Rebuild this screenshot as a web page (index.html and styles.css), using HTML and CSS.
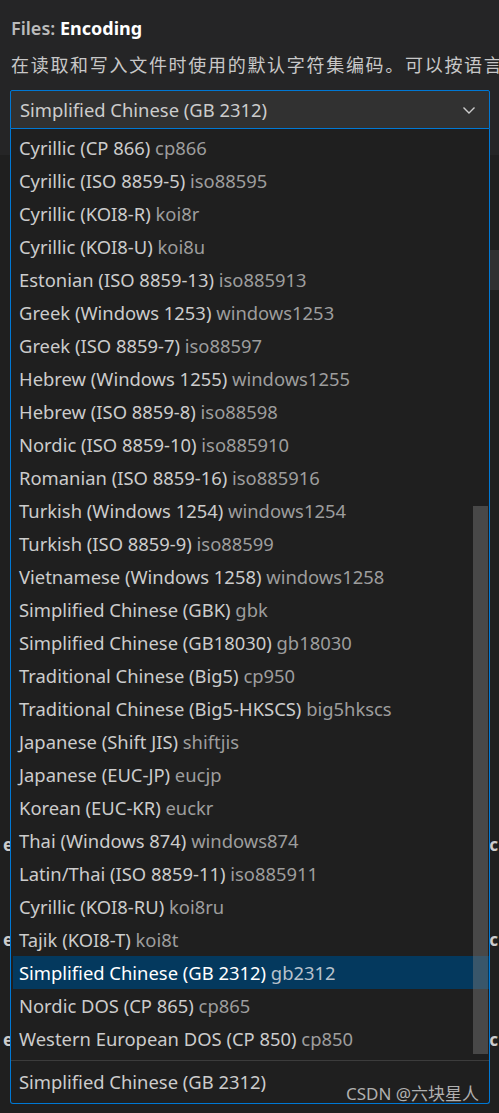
FILE: index.html
```html
<!DOCTYPE html>
<html lang="zh-CN">
<head>
<meta charset="utf-8">
<title>Files: Encoding</title>
<link rel="stylesheet" href="styles.css">
</head>
<body>
<div class="page">
  <div class="setting">
    <div class="title"><span class="cat">Files: </span><span class="name">Encoding</span></div>
    <div class="desc">在读取和写入文件时使用的默认字符集编码。可以按语言对此项进行配置。</div>
    <div class="select">
      <span class="select-text">Simplified Chinese (GB 2312)</span>
      <svg class="chev" width="16" height="16" viewBox="0 0 16 16"><path d="M2.5 5.5 L8 11 L13.5 5.5" fill="none" stroke="#cccccc" stroke-width="1.4"/></svg>
    </div>
  </div>
  <div class="bg-input"></div>
  <div class="bg-row r1"><span>e</span><span>c</span></div>
  <div class="bg-row r2"><span>e</span><span>c</span></div>
  <div class="bg-row r3"><span>e</span><span>c</span></div>

  <div class="dropdown">
    <div class="options">
      <div class="opt">Cyrillic (CP 866) <span class="d">cp866</span></div>
      <div class="opt">Cyrillic (ISO 8859-5) <span class="d">iso88595</span></div>
      <div class="opt">Cyrillic (KOI8-R) <span class="d">koi8r</span></div>
      <div class="opt">Cyrillic (KOI8-U) <span class="d">koi8u</span></div>
      <div class="opt">Estonian (ISO 8859-13) <span class="d">iso885913</span></div>
      <div class="opt">Greek (Windows 1253) <span class="d">windows1253</span></div>
      <div class="opt">Greek (ISO 8859-7) <span class="d">iso88597</span></div>
      <div class="opt">Hebrew (Windows 1255) <span class="d">windows1255</span></div>
      <div class="opt">Hebrew (ISO 8859-8) <span class="d">iso88598</span></div>
      <div class="opt">Nordic (ISO 8859-10) <span class="d">iso885910</span></div>
      <div class="opt">Romanian (ISO 8859-16) <span class="d">iso885916</span></div>
      <div class="opt">Turkish (Windows 1254) <span class="d">windows1254</span></div>
      <div class="opt">Turkish (ISO 8859-9) <span class="d">iso88599</span></div>
      <div class="opt">Vietnamese (Windows 1258) <span class="d">windows1258</span></div>
      <div class="opt">Simplified Chinese (GBK) <span class="d">gbk</span></div>
      <div class="opt">Simplified Chinese (GB18030) <span class="d">gb18030</span></div>
      <div class="opt">Traditional Chinese (Big5) <span class="d">cp950</span></div>
      <div class="opt">Traditional Chinese (Big5-HKSCS) <span class="d">big5hkscs</span></div>
      <div class="opt">Japanese (Shift JIS) <span class="d">shiftjis</span></div>
      <div class="opt">Japanese (EUC-JP) <span class="d">eucjp</span></div>
      <div class="opt">Korean (EUC-KR) <span class="d">euckr</span></div>
      <div class="opt">Thai (Windows 874) <span class="d">windows874</span></div>
      <div class="opt">Latin/Thai (ISO 8859-11) <span class="d">iso885911</span></div>
      <div class="opt">Cyrillic (KOI8-RU) <span class="d">koi8ru</span></div>
      <div class="opt">Tajik (KOI8-T) <span class="d">koi8t</span></div>
      <div class="opt sel">Simplified Chinese (GB 2312) <span class="d">gb2312</span></div>
      <div class="opt">Nordic DOS (CP 865) <span class="d">cp865</span></div>
      <div class="opt">Western European DOS (CP 850) <span class="d">cp850</span></div>
    </div>
    <div class="sep"></div>
    <div class="details">Simplified Chinese (GB 2312)</div>
    <div class="scrollbar"></div>
  </div>
  <div class="watermark">CSDN @六块星人</div>
</div>
</body>
</html>
```
FILE: styles.css
```css
html, body {
  margin: 0;
  padding: 0;
  background: #1f1f1f;
}
.page {
  position: relative;
  width: 499px;
  height: 1113px;
  overflow: hidden;
  font-family: "Noto Sans", "Noto Sans CJK SC", sans-serif;
  color: #cccccc;
}
.setting {
  background: #252526;
  padding: 17px 0 26px 0;
}
.title {
  padding-left: 11px;
  font-size: 18px;
  line-height: 22px;
  font-weight: 600;
}
.cat { color: #bbbbbb; }
.name { color: #ffffff; font-weight: 700; }
.desc {
  margin-top: 13px;
  padding-left: 11px;
  font-family: "Noto Sans CJK SC", sans-serif;
  font-size: 18px;
  letter-spacing: 1.7px;
  line-height: 24px;
  white-space: nowrap;
  overflow: hidden;
  color: #c8c8c8;
}
.select {
  margin: 14px 0 0 10px;
  width: 480px;
  height: 39px;
  box-sizing: border-box;
  border: 1px solid #0078d4;
  border-radius: 2px 2px 0 0;
  background: #313131;
  display: flex;
  align-items: center;
  justify-content: space-between;
  padding: 0 12px 0 9px;
}
.select-text {
  font-size: 18.4px;
  color: #cccccc;
}
.chev { display: block; }
.bg-input {
  margin-top: 95px;
  margin-left: 10px;
  height: 40px;
  background: #313131;
}
.bg-row {
  display: flex;
  justify-content: space-between;
  font-size: 17px;
  line-height: 22px;
  font-weight: 700;
  color: #cccccc;
  padding: 0 1px 0 3px;
}
.r1 { margin-top: 544px; }
.r2 { margin-top: 73px; }
.r3 { margin-top: 78px; }
.dropdown {
  position: absolute;
  left: 10px;
  top: 129px;
  width: 480px;
  height: 975px;
  box-sizing: border-box;
  border: 1px solid #0078d4;
  border-top: none;
  border-radius: 0 0 3px 3px;
  background: #1f1f1f;
  padding-top: 2px;
}
.options {
  margin-left: 2px;
}
.opt {
  height: 33px;
  line-height: 34px;
  padding-left: 6px;
  font-size: 18.4px;
  color: #cccccc;
  white-space: nowrap;
}
.opt .d { color: #9d9d9d; }
.opt.sel { background: #04395e; color: #ffffff; }
.opt.sel .d { color: #b8c2cc; }
.sep {
  margin-top: 5px;
  height: 1px;
  background: #3c3c3c;
}
.details {
  height: 40px;
  line-height: 41px;
  padding-left: 8px;
  font-size: 18.4px;
  color: #cccccc;
}
.scrollbar {
  position: absolute;
  right: 1px;
  top: 377px;
  width: 15px;
  height: 548px;
  background: rgba(121, 121, 121, 0.45);
}
.watermark {
  position: absolute;
  left: 346px;
  top: 1083px;
  font-family: "Noto Sans", "Noto Sans CJK SC", sans-serif;
  font-size: 17px;
  line-height: 22px;
  color: #b0b0b0;
}
```
